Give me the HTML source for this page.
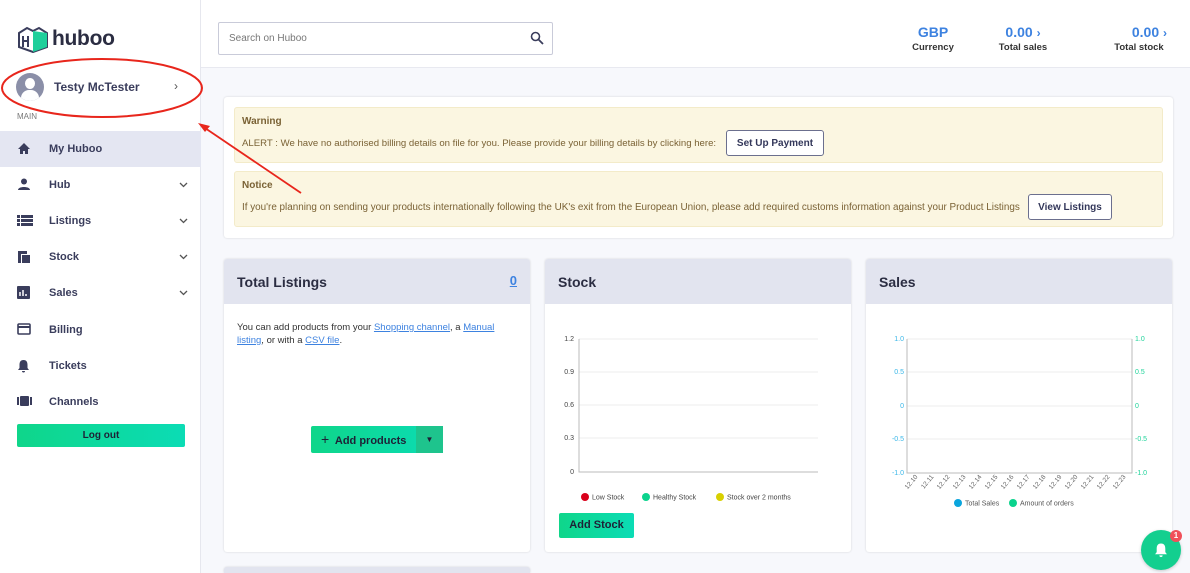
<!DOCTYPE html>
<html style="overflow:hidden;height:573px"><head><meta charset="utf-8"><style>
*{box-sizing:border-box;margin:0;padding:0}
body{width:1190px;height:573px;overflow:hidden;background:#f7f8fc;font-family:"Liberation Sans",sans-serif;position:relative;color:#2b2d42}
.abs{position:absolute}
#side{left:0;top:0;width:201px;height:573px;background:#fff;border-right:1px solid #e6e7ee}
#top{left:201px;top:0;width:989px;height:68px;background:#fff;border-bottom:1px solid #e8e9f0}
.nav{position:absolute;left:0;width:201px;height:36px;font-size:11px;font-weight:bold;color:#3a3d5c}
.nav span{position:absolute;left:49px;top:12px}
.nav svg{position:absolute;left:17px;top:11px}
.nav svg.chev{left:179px;top:15px}
.card{position:absolute;background:#fff;box-shadow:0 0 2px rgba(0,0,0,.15);border-radius:3px}
.ch{position:absolute;left:0;top:0;right:0;height:45px;background:#e2e4ef;border-radius:3px 3px 0 0;font-size:14px;font-weight:bold;padding:15px 13px;color:#2b2d42}
.box{position:absolute;left:234px;width:929px;height:56px;background:#fbf6e1;border:1px solid #f3ebc9;border-radius:3px;color:#7a6235;font-size:9.9px}
.box b{position:absolute;left:7px;top:8px;font-size:10px}
.box i{font-style:normal;position:absolute;left:7px;top:30px;white-space:nowrap}
.btn{position:absolute;background:#fff;border:1px solid #6b6f8e;border-radius:3px;font-size:10px;font-weight:bold;color:#33375a;text-align:center;line-height:25px}
.stat{position:absolute;text-align:center;font-weight:bold}
.stat .v{color:#3d82e0;font-size:14px}
.stat .l{color:#333;font-size:9.5px;margin-top:2px}
a{color:#3d82e0;text-decoration:underline}
</style></head><body>
<div id="side" class="abs">
  <svg class="abs" style="left:17px;top:25px" width="32" height="28" viewBox="0 0 32 28"><path d="M2 8 L10 3 L16 6 L22 3 L30 8 L30 22 L16 27 L2 22 Z" fill="#fff" stroke="#3a3d5c" stroke-width="2"/><path d="M16 6 L30 8 L30 22 L16 27 Z" fill="#1fcf9b"/><path d="M6 11v11M11 11v11M6 16h5" stroke="#3a3d5c" stroke-width="2"/></svg>
  <div class="abs" style="left:52px;top:27px;font-size:21px;font-weight:bold;color:#2b2d42;letter-spacing:-0.3px">huboo</div>
  <div class="abs" style="left:16px;top:73px;width:28px;height:28px;border-radius:50%;background:#8b8fa8;overflow:hidden"><div class="abs" style="left:9px;top:5px;width:10px;height:11px;border-radius:50%;background:#fff"></div><div class="abs" style="left:5px;top:17px;width:18px;height:12px;border-radius:8px 8px 0 0;background:#fff"></div></div>
  <div class="abs" style="left:54px;top:80px;font-size:12px;font-weight:bold;color:#3a3d5c">Testy McTester</div>
  <div class="abs" style="left:174px;top:79px;font-size:12px;color:#555">›</div>
  <div class="abs" style="left:17px;top:112px;font-size:8px;color:#777">MAIN</div>
  <div class="nav" style="top:131px;background:#e4e6f2"><svg width="14" height="13" viewBox="0 0 14 13"><path d="M7 1L1 7h2v5h3V9h2v3h3V7h2z" fill="#3a3d5c"/></svg><span>My Huboo</span></div>
  <div class="nav" style="top:167px"><svg width="14" height="13" viewBox="0 0 14 13"><circle cx="7" cy="3.5" r="3" fill="#3a3d5c"/><path d="M1 12c0-4 12-4 12 0z" fill="#3a3d5c"/></svg><span>Hub</span><svg class="chev" width="9" height="6" viewBox="0 0 9 6"><path d="M1 1l3.5 3.5L8 1" stroke="#555" stroke-width="1.3" fill="none"/></svg></div>
  <div class="nav" style="top:203px"><svg width="16" height="13" viewBox="0 0 16 13"><path d="M0 1h3v3H0zM4 1h12v3H4zM0 5h3v3H0zM4 5h12v3H4zM0 9h3v3H0zM4 9h12v3H4z" fill="#3a3d5c"/></svg><span>Listings</span><svg class="chev" width="9" height="6" viewBox="0 0 9 6"><path d="M1 1l3.5 3.5L8 1" stroke="#555" stroke-width="1.3" fill="none"/></svg></div>
  <div class="nav" style="top:239px"><svg width="14" height="14" viewBox="0 0 14 14"><path d="M1 1h9v3H4v9H1z" fill="#3a3d5c"/><rect x="5" y="5" width="8" height="8" fill="#3a3d5c"/></svg><span>Stock</span><svg class="chev" width="9" height="6" viewBox="0 0 9 6"><path d="M1 1l3.5 3.5L8 1" stroke="#555" stroke-width="1.3" fill="none"/></svg></div>
  <div class="nav" style="top:275px"><svg width="13" height="13" viewBox="0 0 13 13"><rect width="13" height="13" rx="1" fill="#3a3d5c"/><path d="M3 10V6M6 10V4M9 10V8" stroke="#fff" stroke-width="1.5"/></svg><span>Sales</span><svg class="chev" width="9" height="6" viewBox="0 0 9 6"><path d="M1 1l3.5 3.5L8 1" stroke="#555" stroke-width="1.3" fill="none"/></svg></div>
  <div class="nav" style="top:312px"><svg width="14" height="12" viewBox="0 0 14 12"><rect x="1" y="1" width="12" height="10" rx="1" fill="none" stroke="#3a3d5c" stroke-width="1.6"/><path d="M1 4h12" stroke="#3a3d5c" stroke-width="2"/></svg><span>Billing</span></div>
  <div class="nav" style="top:348px"><svg width="13" height="14" viewBox="0 0 13 14"><path d="M6.5 1c-3 0-4 2-4 5v3L1 11h11l-1.5-2V6c0-3-1-5-4-5z M5 12h3a1.5 1.5 0 0 1-3 0z" fill="#3a3d5c"/></svg><span>Tickets</span></div>
  <div class="nav" style="top:384px"><svg width="15" height="12" viewBox="0 0 15 12"><rect x="0" y="2" width="2" height="8" fill="#3a3d5c"/><rect x="3" y="1" width="9" height="10" rx="1" fill="#3a3d5c"/><rect x="13" y="2" width="2" height="8" fill="#3a3d5c"/></svg><span>Channels</span></div>
  <div class="abs" style="left:17px;top:424px;width:168px;height:23px;border-radius:2px;background:linear-gradient(90deg,#0fd68a,#0bdcb5);font-size:10px;font-weight:bold;text-align:center;line-height:23px;color:#1e2136">Log out</div>
</div>
<div id="top" class="abs"></div>
<div class="abs" style="left:218px;top:22px;width:335px;height:33px;border:1px solid #c9cbd9;border-radius:2px;background:#fff;font-size:10px;color:#777;padding:10px 10px">Search on Huboo
  <svg class="abs" style="right:8px;top:8px" width="14" height="14" viewBox="0 0 14 14"><circle cx="5.5" cy="5.5" r="4" fill="none" stroke="#3a3d5c" stroke-width="1.6"/><path d="M8.5 8.5L13 13" stroke="#3a3d5c" stroke-width="1.8"/></svg></div>
<div class="stat" style="left:900px;top:24px;width:66px"><div class="v">GBP</div><div class="l">Currency</div></div>
<div class="stat" style="left:990px;top:24px;width:66px"><div class="v">0.00 <span style="font-size:12px">›</span></div><div class="l">Total sales</div></div>
<div class="stat" style="left:1105px;top:24px;width:68px"><div class="v" style="text-align:right;padding-right:6px">0.00 <span style="font-size:12px">›</span></div><div class="l">Total stock</div></div>

<div class="card" style="left:224px;top:97px;width:949px;height:141px"></div>
<div class="box" style="top:107px"><b>Warning</b><i style="font-size:9.6px">ALERT : We have no authorised billing details on file for you. Please provide your billing details by clicking here:</i></div>
<div class="btn" style="left:726px;top:130px;width:98px;height:26px">Set Up Payment</div>
<div class="box" style="top:171px"><b>Notice</b><i>If you're planning on sending your products internationally following the UK's exit from the European Union, please add required customs information against your Product Listings</i></div>
<div class="btn" style="left:1028px;top:194px;width:84px;height:26px">View Listings</div>

<div class="card" style="left:224px;top:259px;width:306px;height:293px">
  <div class="ch">Total Listings<a style="position:absolute;right:13px;top:14px;font-size:13px">0</a></div>
  <div class="abs" style="left:13px;top:62px;width:285px;font-size:9.5px;line-height:13px;color:#333">You can add products from your <a>Shopping channel</a>, a <a>Manual listing</a>, or with a <a>CSV file</a>.</div>
  <div class="abs" style="left:87px;top:167px;width:132px;height:27px;border-radius:2px;background:linear-gradient(90deg,#0fd68a,#0bdcb5);font-size:11px;font-weight:bold;line-height:27px;color:#1e2136;padding-left:10px"><span style="font-size:14px;font-weight:normal">+</span>&nbsp; Add products<div class="abs" style="right:0;top:0;width:27px;height:27px;background:#1ec48d;text-align:center;font-size:8px">▼</div></div>
</div>

<div class="card" style="left:545px;top:259px;width:306px;height:293px">
  <div class="ch">Stock</div>
  <svg class="abs" style="left:0;top:0" width="306" height="293">
    <g stroke="#eee"><path d="M34 80H273M34 113H273M34 146H273M34 179H273"/></g>
    <path d="M34 80V213H273" stroke="#bbb" fill="none"/>
    <g font-size="7" fill="#444" font-family="Liberation Sans" text-anchor="end"><text x="29" y="82">1.2</text><text x="29" y="115">0.9</text><text x="29" y="148">0.6</text><text x="29" y="181">0.3</text><text x="29" y="215">0</text></g>
    <circle cx="40" cy="238" r="4" fill="#d9001b"/><circle cx="101" cy="238" r="4" fill="#0bd38d"/><circle cx="175" cy="238" r="4" fill="#d8d000"/>
    <g font-size="7" fill="#444" font-family="Liberation Sans"><text x="47" y="240.5">Low Stock</text><text x="108" y="240.5">Healthy Stock</text><text x="182" y="240.5">Stock over 2 months</text></g>
  </svg>
  <div class="abs" style="left:14px;top:254px;width:75px;height:25px;border-radius:2px;background:linear-gradient(90deg,#0fd68a,#0bdcb5);font-size:11px;font-weight:bold;text-align:center;line-height:25px;color:#1e2136">Add Stock</div>
</div>

<div class="card" style="left:866px;top:259px;width:306px;height:293px">
  <div class="ch">Sales</div>
  <svg class="abs" style="left:0;top:0" width="306" height="293">
    <g stroke="#eee"><path d="M41 80H266M41 113H266M41 147H266M41 180H266"/></g>
    <path d="M41 80V214H266V80" stroke="#bbb" fill="none"/>
    <g font-size="7" fill="#3ab7e8" font-family="Liberation Sans" text-anchor="end"><text x="38" y="82">1.0</text><text x="38" y="115">0.5</text><text x="38" y="149">0</text><text x="38" y="182">-0.5</text><text x="38" y="216">-1.0</text></g>
    <g font-size="7" fill="#1fd39a" font-family="Liberation Sans"><text x="269" y="82">1.0</text><text x="269" y="115">0.5</text><text x="269" y="149">0</text><text x="269" y="182">-0.5</text><text x="269" y="216">-1.0</text></g>
    <g font-size="6.5" fill="#666" font-family="Liberation Sans" text-anchor="end">
      <text transform="translate(52,218) rotate(-50)">12.10</text><text transform="translate(68,218) rotate(-50)">12.11</text><text transform="translate(84,218) rotate(-50)">12.12</text><text transform="translate(100,218) rotate(-50)">12.13</text><text transform="translate(116,218) rotate(-50)">12.14</text><text transform="translate(132,218) rotate(-50)">12.15</text><text transform="translate(148,218) rotate(-50)">12.16</text><text transform="translate(164,218) rotate(-50)">12.17</text><text transform="translate(180,218) rotate(-50)">12.18</text><text transform="translate(196,218) rotate(-50)">12.19</text><text transform="translate(212,218) rotate(-50)">12.20</text><text transform="translate(228,218) rotate(-50)">12.21</text><text transform="translate(244,218) rotate(-50)">12.22</text><text transform="translate(260,218) rotate(-50)">12.23</text></g>
    <circle cx="92" cy="244" r="4" fill="#0aa5dd"/><circle cx="147" cy="244" r="4" fill="#0bd38d"/>
    <g font-size="7" fill="#555" font-family="Liberation Sans"><text x="99" y="246.5">Total Sales</text><text x="154" y="246.5">Amount of orders</text></g>
  </svg>
</div>
<div class="card" style="left:224px;top:567px;width:306px;height:6px;background:#e2e4ef;border-radius:3px 3px 0 0"></div>

<div class="abs" style="left:1141px;top:530px;width:40px;height:40px;border-radius:50%;background:#13cf8f;box-shadow:0 1px 3px rgba(0,0,0,.2)"><svg class="abs" style="left:13px;top:12px" width="14" height="16" viewBox="0 0 13 14"><path d="M6.5 1c-3 0-4 2-4 5v3L1 11h11l-1.5-2V6c0-3-1-5-4-5z M5 12h3a1.5 1.5 0 0 1-3 0z" fill="#fff"/></svg></div>
<div class="abs" style="left:1170px;top:530px;width:12px;height:12px;border-radius:50%;background:#f0505a;color:#fff;font-size:8px;text-align:center;line-height:12px;font-weight:bold">1</div>

<svg class="abs" style="left:0;top:0" width="320" height="210">
  <ellipse cx="102" cy="88" rx="100" ry="29" fill="none" stroke="#e8261c" stroke-width="2"/>
  <path d="M301 193L202 126" stroke="#e8261c" stroke-width="1.8"/>
  <path d="M198 123L210 126L205 132Z" fill="#e8261c"/>
</svg>
</body></html>
